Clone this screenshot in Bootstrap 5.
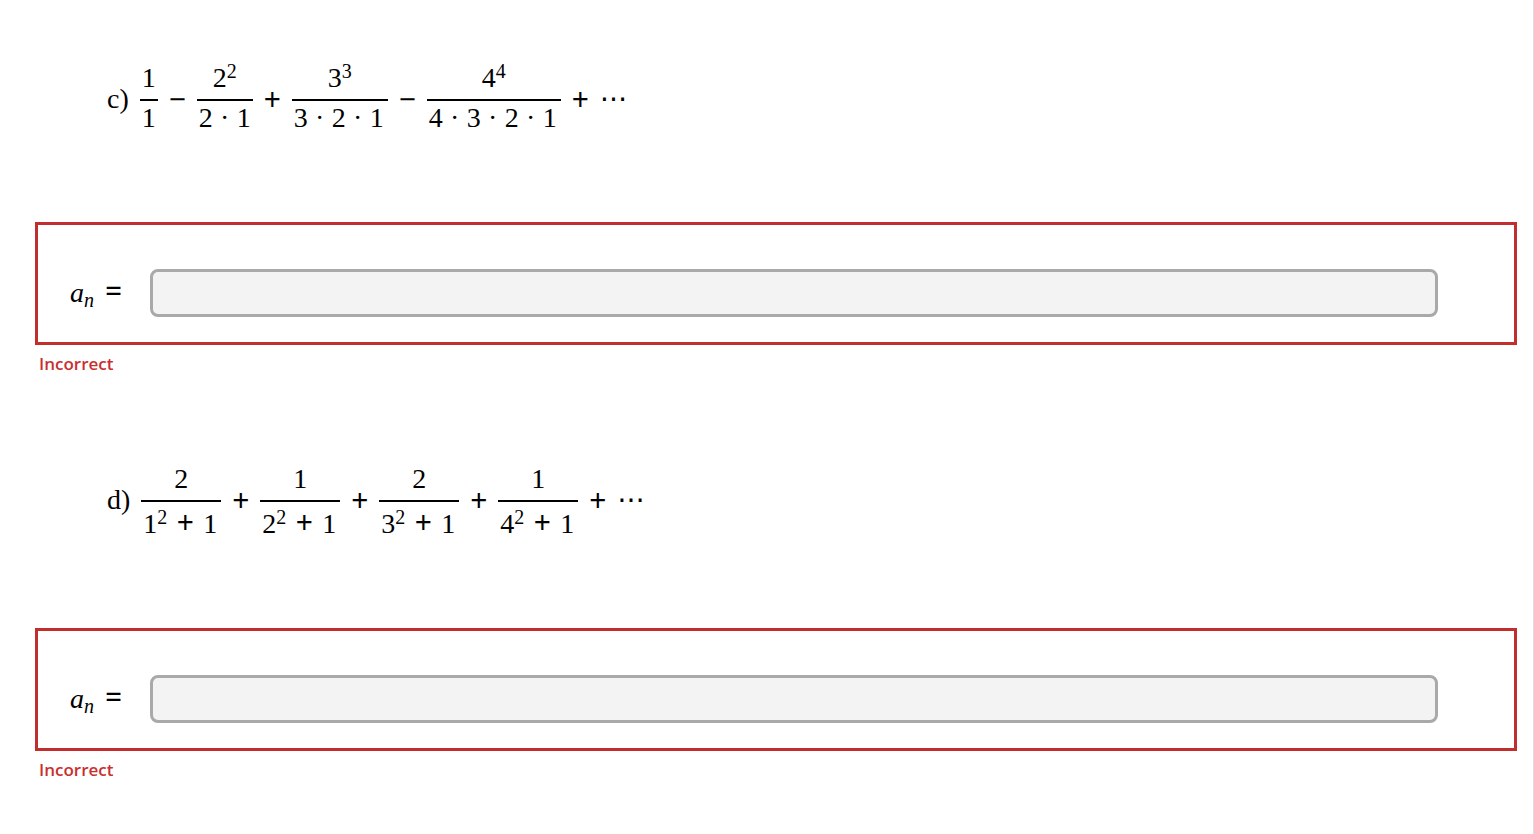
<!DOCTYPE html>
<html lang="en">
<head>
<meta charset="utf-8">
<meta name="viewport" content="width=device-width, initial-scale=1">
<title>Series</title>
<link href="https://cdn.jsdelivr.net/npm/bootstrap@5.3.0/dist/css/bootstrap.min.css" rel="stylesheet">
<style>
body{background:#fff;color:#000;font-family:"Open Sans",sans-serif}
.page{min-height:100vh;border-right:1px solid #ddd;padding:0 16px 0 35px}
.expr{font-family:"Liberation Serif",serif;font-size:28px;line-height:32px;padding-left:72px;white-space:nowrap}
.series-c{padding-top:61px;padding-bottom:85px}
.series-d{padding-top:86px;padding-bottom:90px}
.part{margin-right:11px}
.frac{text-align:center}
.frac>span{display:block;height:38px;line-height:34px;padding:0 2px}
.frac>span+span{border-top:2px solid #000}
.wide>span+span{padding:0 4px 0 2px}
.power>span+span{line-height:44px}
.expr sup{font-size:20px;line-height:0;top:-9px}
.dot{display:inline-block;width:24px}
.op,.plus,.eq{font-family:"Noto Sans",sans-serif;font-size:30px;display:inline-block;text-align:center}
.op{width:39px;line-height:30px}
.plus{width:36px;line-height:0}
.dots{font-family:"DejaVu Sans",sans-serif}
.answer{border:3px solid #c22d2d;padding:44px 76px 25px 32px}
.answer label{font-family:"Liberation Serif",serif;font-size:28px;line-height:32px;width:80px}
.answer label sub{font-size:20px;line-height:0}
.eq{line-height:0;padding-left:11px}
.answer .form-control{height:48px;border:3px solid #a9a9a9;border-radius:8px;background:#f3f3f3}
.verdict{color:#c92f2f;font-weight:600;font-size:17px;line-height:24px;padding:7px 0 0 4px}
</style>
</head>
<body>
<main class="page">
<section>
<div class="expr series-c d-flex align-items-center">
<span class="part">c)</span>
<span class="frac"><span>1</span><span>1</span></span>
<span class="op">−</span>
<span class="frac"><span>2<sup>2</sup></span><span>2<span class="dot">·</span>1</span></span>
<span class="op">+</span>
<span class="frac wide"><span>3<sup>3</sup></span><span>3<span class="dot">·</span>2<span class="dot">·</span>1</span></span>
<span class="op">−</span>
<span class="frac wide"><span>4<sup>4</sup></span><span>4<span class="dot">·</span>3<span class="dot">·</span>2<span class="dot">·</span>1</span></span>
<span class="op">+</span>
<span class="dots">⋯</span>
</div>
<div class="answer d-flex align-items-center"><label class="flex-shrink-0" for="answer-c"><i>a<sub>n</sub></i><span class="eq">=</span></label><input id="answer-c" type="text" class="form-control"></div>
<div class="verdict">Incorrect</div>
</section>
<section>
<div class="expr series-d d-flex align-items-center">
<span class="part">d)</span>
<span class="frac wide power"><span>2</span><span>1<sup>2</sup><span class="plus">+</span>1</span></span>
<span class="op">+</span>
<span class="frac wide power"><span>1</span><span>2<sup>2</sup><span class="plus">+</span>1</span></span>
<span class="op">+</span>
<span class="frac wide power"><span>2</span><span>3<sup>2</sup><span class="plus">+</span>1</span></span>
<span class="op">+</span>
<span class="frac wide power"><span>1</span><span>4<sup>2</sup><span class="plus">+</span>1</span></span>
<span class="op">+</span>
<span class="dots">⋯</span>
</div>
<div class="answer d-flex align-items-center"><label class="flex-shrink-0" for="answer-d"><i>a<sub>n</sub></i><span class="eq">=</span></label><input id="answer-d" type="text" class="form-control"></div>
<div class="verdict">Incorrect</div>
</section>
</main>
</body>
</html>
